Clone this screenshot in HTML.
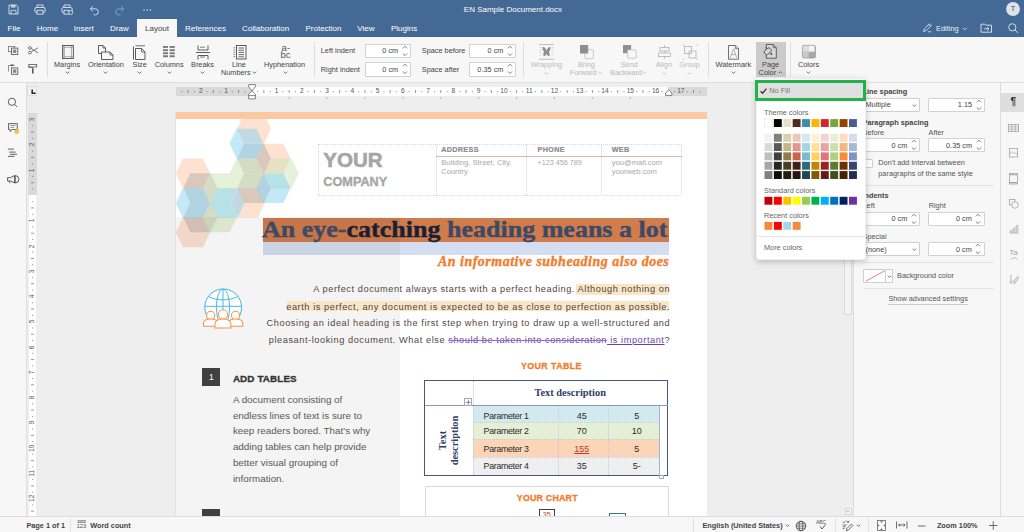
<!DOCTYPE html><html><head><meta charset="utf-8"><style>
*{margin:0;padding:0;box-sizing:border-box}
html,body{width:1024px;height:532px;overflow:hidden;background:#eeeeee;font-family:"Liberation Sans",sans-serif;position:relative}
.a{position:absolute}
.t{position:absolute;white-space:nowrap;line-height:1}
svg{position:absolute;overflow:visible}
</style></head><body>
<div class="a" style="left:0px;top:0px;width:1024px;height:36.5px;background:#446995;"></div>
<svg style="left:7.5px;top:4px" width="11" height="11" viewBox="0 0 11 11"><path d="M1 1h7.3l1.7 1.7v7.3h-9z" fill="none" stroke="#dde5ef" stroke-width="0.9"/><rect x="3" y="1" width="4.5" height="2.6" fill="#dde5ef" opacity="0.8"/><path d="M3 10v-3.6h5v3.6" fill="none" stroke="#dde5ef" stroke-width="0.8"/></svg>
<svg style="left:34px;top:4px" width="12" height="11" viewBox="0 0 12 11"><rect x="0.8" y="3.5" width="10.4" height="5" rx="1.5" fill="none" stroke="#dde5ef" stroke-width="0.9"/><path d="M3 3.5v-2.5h6v2.5" fill="none" stroke="#dde5ef" stroke-width="0.9"/><rect x="3" y="6.3" width="6" height="3.8" fill="#446995" stroke="#dde5ef" stroke-width="0.9"/></svg>
<svg style="left:60.5px;top:4px" width="13" height="11" viewBox="0 0 13 11"><rect x="0.8" y="3.5" width="10.4" height="5" rx="1.5" fill="none" stroke="#dde5ef" stroke-width="0.9"/><path d="M3 3.5v-2.5h6v2.5" fill="none" stroke="#dde5ef" stroke-width="0.9"/><rect x="3" y="6.3" width="5" height="3.8" fill="#446995" stroke="#dde5ef" stroke-width="0.9"/><circle cx="9.8" cy="8.6" r="2" fill="#446995" stroke="#dde5ef" stroke-width="0.8"/></svg>
<svg style="left:88.5px;top:4.5px" width="11" height="11" viewBox="0 0 11 11"><path d="M3.8 1.2L1.2 3.8L3.8 6.4 M1.5 3.8H6.3a3 3 0 0 1 0 6H4.5" fill="none" stroke="#dde5ef" stroke-width="0.9"/></svg>
<svg style="left:114.5px;top:4.5px" width="11" height="11" viewBox="0 0 11 11"><path d="M6.2 1.2L8.8 3.8L6.2 6.4 M8.5 3.8H3.7a3 3 0 0 0 0 6H5.5" fill="none" stroke="#8ea5c3" stroke-width="0.9"/></svg>
<svg style="left:142.8px;top:8.7px" width="9" height="2" viewBox="0 0 9 2"><circle cx="1" cy="1" r="0.7" fill="#e8eef6"/><circle cx="4.2" cy="1" r="0.7" fill="#e8eef6"/><circle cx="7.4" cy="1" r="0.7" fill="#e8eef6"/></svg>
<div class="t" style="left:463.8px;top:5.70px;font-size:8px;color:#ffffff;font-weight:400;font-style:normal;font-family:'Liberation Sans',sans-serif;">EN Sample Document.docx</div>
<svg style="left:1006px;top:2px" width="14" height="14" viewBox="0 0 14 14"><circle cx="7" cy="7" r="6.9" fill="#dfe3ea"/></svg>
<div class="t" style="left:713px;width:600px;text-align:center;top:5.35px;font-size:7.5px;color:#444;font-weight:400;font-style:normal;font-family:'Liberation Sans',sans-serif;">T</div>
<div class="a" style="left:137px;top:19px;width:40px;height:17.5px;background:#f7f7f7;"></div>
<div class="t" style="left:7.5px;top:24.70px;font-size:8px;color:#ffffff;font-weight:400;font-style:normal;font-family:'Liberation Sans',sans-serif;">File</div>
<div class="t" style="left:36.75px;top:24.70px;font-size:8px;color:#ffffff;font-weight:400;font-style:normal;font-family:'Liberation Sans',sans-serif;">Home</div>
<div class="t" style="left:73.75px;top:24.70px;font-size:8px;color:#ffffff;font-weight:400;font-style:normal;font-family:'Liberation Sans',sans-serif;">Insert</div>
<div class="t" style="left:110px;top:24.70px;font-size:8px;color:#ffffff;font-weight:400;font-style:normal;font-family:'Liberation Sans',sans-serif;">Draw</div>
<div class="t" style="left:145px;top:24.70px;font-size:8px;color:#444;font-weight:400;font-style:normal;font-family:'Liberation Sans',sans-serif;">Layout</div>
<div class="t" style="left:185px;top:24.70px;font-size:8px;color:#ffffff;font-weight:400;font-style:normal;font-family:'Liberation Sans',sans-serif;">References</div>
<div class="t" style="left:242px;top:24.70px;font-size:8px;color:#ffffff;font-weight:400;font-style:normal;font-family:'Liberation Sans',sans-serif;">Collaboration</div>
<div class="t" style="left:305.5px;top:24.70px;font-size:8px;color:#ffffff;font-weight:400;font-style:normal;font-family:'Liberation Sans',sans-serif;">Protection</div>
<div class="t" style="left:357.25px;top:24.70px;font-size:8px;color:#ffffff;font-weight:400;font-style:normal;font-family:'Liberation Sans',sans-serif;">View</div>
<div class="t" style="left:391px;top:24.70px;font-size:8px;color:#ffffff;font-weight:400;font-style:normal;font-family:'Liberation Sans',sans-serif;">Plugins</div>
<svg style="left:922px;top:23px" width="11" height="10" viewBox="0 0 11 10"><path d="M1.5 8.5l1-2.8l5-5l1.8 1.8l-5 5z M6.5 1.7l1.8 1.8 M6 8.8h3" fill="none" stroke="#dfe6f0" stroke-width="0.85"/></svg>
<div class="t" style="left:936px;top:24.80px;font-size:7.4px;color:#e8eef6;font-weight:400;font-style:normal;font-family:'Liberation Sans',sans-serif;">Editing</div>
<svg style="left:962px;top:27px" width="6" height="4" viewBox="0 0 6 4"><path d="M0.8 0.8l2 2l2-2" fill="none" stroke="#e8eef6" stroke-width="0.8"/></svg>
<svg style="left:980px;top:23px" width="13" height="10" viewBox="0 0 13 10"><path d="M1 1.2h4l1 1h5.5v7h-10.5z" fill="none" stroke="#dfe6f0" stroke-width="0.9"/><path d="M4 5.8h5 M7.2 4l1.8 1.8l-1.8 1.8" fill="none" stroke="#dfe6f0" stroke-width="0.85"/></svg>
<svg style="left:1008px;top:23px" width="11" height="11" viewBox="0 0 11 11"><circle cx="4.3" cy="4.3" r="3.6" fill="none" stroke="#dfe6f0" stroke-width="0.9"/><path d="M7 7l3 3" stroke="#dfe6f0" stroke-width="0.9"/></svg>
<div class="a" style="left:0px;top:36.5px;width:1024px;height:45.5px;background:#f7f7f7;"></div>
<div class="a" style="left:0px;top:82px;width:1024px;height:1px;background:#dedede;"></div>
<svg style="left:8px;top:46px" width="11" height="9" viewBox="0 0 11 9"><rect x="0.5" y="0.5" width="6.3" height="5.2" fill="none" stroke="#777" stroke-width="0.8"/><rect x="3.4" y="2.1" width="6.4" height="6.4" fill="#f7f7f7" stroke="#555" stroke-width="0.85"/><rect x="4.9" y="3.6" width="3.4" height="3.4" fill="#888"/></svg>
<svg style="left:8px;top:63.5px" width="11" height="11" viewBox="0 0 11 11"><path d="M0.5 7.5v-6h6" fill="none" stroke="#777" stroke-width="0.8"/><rect x="2.6" y="0.5" width="3" height="1.2" fill="#444"/><rect x="3.4" y="3.9" width="6.4" height="6.4" fill="#f7f7f7" stroke="#555" stroke-width="0.85"/><rect x="4.9" y="5.4" width="3.4" height="3.4" fill="#888"/></svg>
<svg style="left:28px;top:46px" width="11" height="9" viewBox="0 0 11 9"><ellipse cx="1.9" cy="1.9" rx="1.5" ry="1.3" fill="none" stroke="#555" stroke-width="0.8"/><ellipse cx="1.9" cy="6.6" rx="1.5" ry="1.3" fill="none" stroke="#555" stroke-width="0.8"/><path d="M3.3 2.6l6.8 4.2 M3.3 5.9l6.8-4.2" stroke="#555" stroke-width="0.8"/></svg>
<svg style="left:28px;top:64px" width="10" height="10" viewBox="0 0 10 10"><rect x="0.9" y="0.4" width="7.8" height="2.6" fill="#f7f7f7" stroke="#555" stroke-width="0.8"/><path d="M0.9 3h0 M0.9 1.7v1.8h3.9v1.5" fill="none" stroke="#555" stroke-width="0.7"/><rect x="4.2" y="4.5" width="1.3" height="5" fill="#333"/></svg>
<div class="a" style="left:46.5px;top:42px;width:1px;height:34.5px;background:#dedede;"></div>
<svg style="left:62px;top:45px" width="12" height="14" viewBox="0 0 12 14"><rect x="0.45" y="0.45" width="10.9" height="13.1" fill="none" stroke="#4a4a4a" stroke-width="0.9"/><path d="M2.4 0.5v13 M9.4 0.5v13 M0.5 2.3h10.8 M0.5 11.7h10.8" stroke="#777" stroke-width="0.6"/><rect x="0.9" y="0.9" width="1.5" height="12.2" fill="#bbb"/></svg>
<div class="t" style="left:54px;top:61.24px;font-size:7.33px;color:#444;font-weight:400;font-style:normal;font-family:'Liberation Sans',sans-serif;">Margins</div>
<svg style="left:64.5px;top:71.0px" width="5" height="3" viewBox="0 0 5 3"><path d="M0.7 0.7l1.8 1.6l1.8-1.6" fill="none" stroke="#4a4a4a" stroke-width="0.75"/></svg>
<svg style="left:98px;top:44.5px" width="16" height="15" viewBox="0 0 16 15"><path d="M0.5 0.5h4.5l2.5 2.5v5.5h-7z" fill="none" stroke="#4a4a4a" stroke-width="0.9"/><path d="M5 0.5v2.5h2.5" fill="none" stroke="#4a4a4a" stroke-width="0.8"/><path d="M3.5 7h8.5l3 3v4.5h-11.5z" fill="#f7f7f7" stroke="#4a4a4a" stroke-width="0.9"/><path d="M12 7v3h3" fill="none" stroke="#4a4a4a" stroke-width="0.8"/></svg>
<div class="t" style="left:88px;top:61.24px;font-size:7.33px;color:#444;font-weight:400;font-style:normal;font-family:'Liberation Sans',sans-serif;">Orientation</div>
<svg style="left:103.0px;top:71.0px" width="5" height="3" viewBox="0 0 5 3"><path d="M0.7 0.7l1.8 1.6l1.8-1.6" fill="none" stroke="#4a4a4a" stroke-width="0.75"/></svg>
<svg style="left:132px;top:44.5px" width="14" height="15" viewBox="0 0 14 15"><path d="M1.5 1.5v13 M3.5 3.5h6l3.5 3.5v7.5h-9.5z" fill="none" stroke="#4a4a4a" stroke-width="0.9"/><path d="M3.5 0.8h9.5 M9.5 3.5v3.5h3.5" fill="none" stroke="#4a4a4a" stroke-width="0.8"/></svg>
<div class="t" style="left:132.5px;top:61.24px;font-size:7.33px;color:#444;font-weight:400;font-style:normal;font-family:'Liberation Sans',sans-serif;">Size</div>
<svg style="left:136.5px;top:71.0px" width="5" height="3" viewBox="0 0 5 3"><path d="M0.7 0.7l1.8 1.6l1.8-1.6" fill="none" stroke="#4a4a4a" stroke-width="0.75"/></svg>
<svg style="left:163.4px;top:46px" width="12" height="12" viewBox="0 0 12 12"><rect x="0" y="0" width="5" height="1.9" fill="#7a7a7a"/><rect x="6.6" y="0" width="5.2" height="1.9" fill="#7a7a7a"/><rect x="0" y="3.2" width="5" height="1.9" fill="#7a7a7a"/><rect x="6.6" y="3.2" width="5.2" height="1.9" fill="#7a7a7a"/><rect x="0" y="6.3" width="5" height="1.9" fill="#7a7a7a"/><rect x="6.6" y="6.3" width="5.2" height="1.9" fill="#7a7a7a"/><rect x="0" y="9.3" width="5" height="1.9" fill="#7a7a7a"/><rect x="6.6" y="9.3" width="5.2" height="1.9" fill="#7a7a7a"/></svg>
<div class="t" style="left:154.7px;top:61.24px;font-size:7.33px;color:#444;font-weight:400;font-style:normal;font-family:'Liberation Sans',sans-serif;">Columns</div>
<svg style="left:167.0px;top:71.0px" width="5" height="3" viewBox="0 0 5 3"><path d="M0.7 0.7l1.8 1.6l1.8-1.6" fill="none" stroke="#4a4a4a" stroke-width="0.75"/></svg>
<svg style="left:196px;top:44.5px" width="14" height="15" viewBox="0 0 14 15"><path d="M2 0.5v4.5h10v-4.5 M2 14.5v-4h10v4 M0 7.5h14" fill="none" stroke="#4a4a4a" stroke-width="0.9"/><path d="M4 2.2h5 M4 12h5" stroke="#4a4a4a" stroke-width="0.7"/></svg>
<div class="t" style="left:191px;top:61.24px;font-size:7.33px;color:#444;font-weight:400;font-style:normal;font-family:'Liberation Sans',sans-serif;">Breaks</div>
<svg style="left:199.5px;top:71.0px" width="5" height="3" viewBox="0 0 5 3"><path d="M0.7 0.7l1.8 1.6l1.8-1.6" fill="none" stroke="#4a4a4a" stroke-width="0.75"/></svg>
<svg style="left:232.6px;top:44.6px" width="14" height="15" viewBox="0 0 14 15"><rect x="3.5" y="0.5" width="9.5" height="13.5" fill="none" stroke="#4a4a4a" stroke-width="0.9"/><path d="M5.5 3.0h5.5" stroke="#4a4a4a" stroke-width="0.8"/><path d="M0.5 2.8h1.6" stroke="#4a4a4a" stroke-width="0.7"/><path d="M5.5 5.2h5.5" stroke="#4a4a4a" stroke-width="0.8"/><path d="M0.5 5.0h1.6" stroke="#4a4a4a" stroke-width="0.7"/><path d="M5.5 7.4h5.5" stroke="#4a4a4a" stroke-width="0.8"/><path d="M0.5 7.2h1.6" stroke="#4a4a4a" stroke-width="0.7"/><path d="M5.5 9.600000000000001h5.5" stroke="#4a4a4a" stroke-width="0.8"/><path d="M0.5 9.4h1.6" stroke="#4a4a4a" stroke-width="0.7"/><path d="M5.5 11.8h5.5" stroke="#4a4a4a" stroke-width="0.8"/><path d="M0.5 11.600000000000001h1.6" stroke="#4a4a4a" stroke-width="0.7"/></svg>
<div class="t" style="left:232px;top:61.24px;font-size:7.33px;color:#444;font-weight:400;font-style:normal;font-family:'Liberation Sans',sans-serif;">Line</div>
<div class="t" style="left:221px;top:68.93px;font-size:7.33px;color:#444;font-weight:400;font-style:normal;font-family:'Liberation Sans',sans-serif;">Numbers</div>
<svg style="left:252.0px;top:70.8px" width="5" height="3" viewBox="0 0 5 3"><path d="M0.7 0.7l1.8 1.6l1.8-1.6" fill="none" stroke="#4a4a4a" stroke-width="0.75"/></svg>
<div class="t" style="left:281.6px;top:43.45px;font-size:9.5px;color:#555;font-weight:400;font-style:normal;font-family:'Liberation Sans',sans-serif;">a-</div>
<div class="t" style="left:280.4px;top:50.10px;font-size:9.6px;color:#555;font-weight:400;font-style:normal;font-family:'Liberation Sans',sans-serif;">bc</div>
<div class="t" style="left:264px;top:61.24px;font-size:7.33px;color:#444;font-weight:400;font-style:normal;font-family:'Liberation Sans',sans-serif;">Hyphenation</div>
<svg style="left:282.5px;top:71.0px" width="5" height="3" viewBox="0 0 5 3"><path d="M0.7 0.7l1.8 1.6l1.8-1.6" fill="none" stroke="#4a4a4a" stroke-width="0.75"/></svg>
<div class="a" style="left:313.5px;top:42px;width:1px;height:34.5px;background:#dedede;"></div>
<div class="t" style="left:320.8px;top:47.04px;font-size:7.33px;color:#444;font-weight:400;font-style:normal;font-family:'Liberation Sans',sans-serif;">Left indent</div>
<div class="a" style="left:364.5px;top:43.6px;width:46.3px;height:14.6px;background:#fff;border:1px solid #d2d2d2;border-radius:1px"></div>
<div class="t" style="left:-201.8px;width:600px;text-align:right;top:47.23px;font-size:7.33px;color:#444;font-weight:400;font-style:normal;font-family:'Liberation Sans',sans-serif;">0 cm</div>
<svg style="left:401.6px;top:44.6px" width="6" height="13" viewBox="0 0 6 13"><path d="M0.9 3.3l2.1-2.1l2.1 2.1 M0.9 8.5l2.1 2.1l2.1-2.1" fill="none" stroke="#555" stroke-width="0.75"/></svg>
<div class="t" style="left:320.8px;top:65.73px;font-size:7.33px;color:#444;font-weight:400;font-style:normal;font-family:'Liberation Sans',sans-serif;">Right indent</div>
<div class="a" style="left:364.5px;top:62.2px;width:46.3px;height:14.6px;background:#fff;border:1px solid #d2d2d2;border-radius:1px"></div>
<div class="t" style="left:-201.8px;width:600px;text-align:right;top:65.83px;font-size:7.33px;color:#444;font-weight:400;font-style:normal;font-family:'Liberation Sans',sans-serif;">0 cm</div>
<svg style="left:401.6px;top:63.2px" width="6" height="13" viewBox="0 0 6 13"><path d="M0.9 3.3l2.1-2.1l2.1 2.1 M0.9 8.5l2.1 2.1l2.1-2.1" fill="none" stroke="#555" stroke-width="0.75"/></svg>
<div class="t" style="left:421.8px;top:47.04px;font-size:7.33px;color:#444;font-weight:400;font-style:normal;font-family:'Liberation Sans',sans-serif;">Space before</div>
<div class="a" style="left:469.3px;top:43.6px;width:46.7px;height:14.6px;background:#fff;border:1px solid #d2d2d2;border-radius:1px"></div>
<div class="t" style="left:-96.60000000000002px;width:600px;text-align:right;top:47.23px;font-size:7.33px;color:#444;font-weight:400;font-style:normal;font-family:'Liberation Sans',sans-serif;">0 cm</div>
<svg style="left:506.8px;top:44.6px" width="6" height="13" viewBox="0 0 6 13"><path d="M0.9 3.3l2.1-2.1l2.1 2.1 M0.9 8.5l2.1 2.1l2.1-2.1" fill="none" stroke="#555" stroke-width="0.75"/></svg>
<div class="t" style="left:421.8px;top:65.73px;font-size:7.33px;color:#444;font-weight:400;font-style:normal;font-family:'Liberation Sans',sans-serif;">Space after</div>
<div class="a" style="left:469.3px;top:62.2px;width:46.7px;height:14.6px;background:#fff;border:1px solid #d2d2d2;border-radius:1px"></div>
<div class="t" style="left:-96.60000000000002px;width:600px;text-align:right;top:65.83px;font-size:7.33px;color:#444;font-weight:400;font-style:normal;font-family:'Liberation Sans',sans-serif;">0.35 cm</div>
<svg style="left:506.8px;top:63.2px" width="6" height="13" viewBox="0 0 6 13"><path d="M0.9 3.3l2.1-2.1l2.1 2.1 M0.9 8.5l2.1 2.1l2.1-2.1" fill="none" stroke="#555" stroke-width="0.75"/></svg>
<div class="a" style="left:523.3px;top:42px;width:1px;height:34.5px;background:#dedede;"></div>
<svg style="left:539px;top:44px" width="16" height="16" viewBox="0 0 16 16"><path d="M0 0.6h15 M0 15.2h15" stroke="#bdbdbd" stroke-width="1"/><path d="M0.5 3.5h2 M0.5 6h2 M0.5 8.5h2 M0.5 11h2 M12.5 3.5h2 M12.5 6h2 M12.5 8.5h2 M12.5 11h2" stroke="#cfcfcf" stroke-width="0.8"/><path d="M3.6 3.2c1.8-0.5 3.2 1.5 3.9 3.5c0.7-2 2.1-4 3.9-3.5c0.3 2-0.4 3.6-1.6 4.6c1 1 1.2 3 0.4 4.5c-1.2 0.2-2.2-1.2-2.7-2.5c-0.5 1.3-1.5 2.7-2.7 2.5c-0.8-1.5-0.6-3.5 0.4-4.5c-1.2-1-1.9-2.6-1.6-4.6z" fill="#8f8f8f"/></svg>
<div class="t" style="left:530.8px;top:61.43px;font-size:7.33px;color:#b9b9b9;font-weight:400;font-style:normal;font-family:'Liberation Sans',sans-serif;">Wrapping</div>
<svg style="left:544.0px;top:71.5px" width="5" height="3" viewBox="0 0 5 3"><path d="M0.7 0.7l1.8 1.6l1.8-1.6" fill="none" stroke="#b9b9b9" stroke-width="0.75"/></svg>
<svg style="left:580px;top:44.9px" width="14" height="14" viewBox="0 0 14 14"><rect x="4.9" y="4.8" width="8.5" height="8.8" rx="1.2" fill="none" stroke="#c4c4c4" stroke-width="0.9"/><rect x="0" y="0" width="8.2" height="8.5" fill="#8f8f8f"/></svg>
<div class="t" style="left:577.7px;top:61.43px;font-size:7.33px;color:#b9b9b9;font-weight:400;font-style:normal;font-family:'Liberation Sans',sans-serif;">Bring</div>
<div class="t" style="left:569.7px;top:68.93px;font-size:7.33px;color:#b9b9b9;font-weight:400;font-style:normal;font-family:'Liberation Sans',sans-serif;">Forward</div>
<svg style="left:597.5px;top:70.8px" width="5" height="3" viewBox="0 0 5 3"><path d="M0.7 0.7l1.8 1.6l1.8-1.6" fill="none" stroke="#b9b9b9" stroke-width="0.75"/></svg>
<svg style="left:622.9px;top:45px" width="14" height="14" viewBox="0 0 14 14"><rect x="0" y="0" width="8.1" height="8.2" fill="#8f8f8f"/><rect x="4.6" y="4.9" width="8.6" height="8.4" rx="1.2" fill="#f7f7f7" stroke="#c4c4c4" stroke-width="0.9"/></svg>
<div class="t" style="left:620.7px;top:61.43px;font-size:7.33px;color:#b9b9b9;font-weight:400;font-style:normal;font-family:'Liberation Sans',sans-serif;">Send</div>
<div class="t" style="left:610px;top:68.93px;font-size:7.33px;color:#b9b9b9;font-weight:400;font-style:normal;font-family:'Liberation Sans',sans-serif;">Backward</div>
<svg style="left:642.0px;top:70.8px" width="5" height="3" viewBox="0 0 5 3"><path d="M0.7 0.7l1.8 1.6l1.8-1.6" fill="none" stroke="#b9b9b9" stroke-width="0.75"/></svg>
<svg style="left:658px;top:45px" width="13" height="14" viewBox="0 0 13 14"><path d="M6.5 0v14" stroke="#b9b9b9" stroke-width="0.9"/><rect x="2" y="2.5" width="9" height="3.5" fill="#f7f7f7" stroke="#b9b9b9" stroke-width="0.9"/><rect x="0.5" y="8" width="12" height="3.5" fill="#f7f7f7" stroke="#b9b9b9" stroke-width="0.9"/></svg>
<div class="t" style="left:655.7px;top:61.43px;font-size:7.33px;color:#b9b9b9;font-weight:400;font-style:normal;font-family:'Liberation Sans',sans-serif;">Align</div>
<svg style="left:661.5px;top:71.5px" width="5" height="3" viewBox="0 0 5 3"><path d="M0.7 0.7l1.8 1.6l1.8-1.6" fill="none" stroke="#b9b9b9" stroke-width="0.75"/></svg>
<svg style="left:683px;top:44.5px" width="15" height="15" viewBox="0 0 15 15"><rect x="1.5" y="1.5" width="7" height="7" fill="none" stroke="#b9b9b9" stroke-width="0.9"/><rect x="6" y="6" width="7" height="7" fill="none" stroke="#b9b9b9" stroke-width="0.9"/><path d="M0 0h1.2 M13.5 0h1.2 M0 14h1.2 M13.5 14h1.2" stroke="#b9b9b9" stroke-width="1"/></svg>
<div class="t" style="left:679.3px;top:61.43px;font-size:7.33px;color:#b9b9b9;font-weight:400;font-style:normal;font-family:'Liberation Sans',sans-serif;">Group</div>
<svg style="left:687.1px;top:71.5px" width="5" height="3" viewBox="0 0 5 3"><path d="M0.7 0.7l1.8 1.6l1.8-1.6" fill="none" stroke="#b9b9b9" stroke-width="0.75"/></svg>
<div class="a" style="left:708px;top:42px;width:1px;height:34.5px;background:#dedede;"></div>
<svg style="left:728.2px;top:44.8px" width="11" height="15" viewBox="0 0 11 15"><path d="M0.5 0.5h6.8l3.2 3.2v10.5h-10z" fill="none" stroke="#5a5a5a" stroke-width="0.85"/><path d="M7.3 0.5v3.2h3.2" fill="none" stroke="#5a5a5a" stroke-width="0.75"/><path d="M2.2 12.8l3.3-9l3.3 9 M3.4 9.6h4.2" fill="none" stroke="#9a9a9a" stroke-width="0.75"/></svg>
<div class="t" style="left:715.6px;top:61.24px;font-size:7.33px;color:#444;font-weight:400;font-style:normal;font-family:'Liberation Sans',sans-serif;">Watermark</div>
<svg style="left:731.0px;top:71.0px" width="5" height="3" viewBox="0 0 5 3"><path d="M0.7 0.7l1.8 1.6l1.8-1.6" fill="none" stroke="#4a4a4a" stroke-width="0.75"/></svg>
<div class="a" style="left:755.5px;top:42px;width:30.5px;height:35px;background:#cbcbcb;"></div>
<svg style="left:764px;top:44.3px" width="13" height="15" viewBox="0 0 13 15"><path d="M2.3 0.5h6.8l3.2 3.2v10.5h-10z" fill="#dadada" stroke="#4a4a4a" stroke-width="0.85"/><path d="M9.1 0.5v3.2h3.2" fill="none" stroke="#4a4a4a" stroke-width="0.75"/><rect x="0.2" y="4.9" width="7.2" height="4.8" rx="1.6" transform="rotate(-40 3.8 7.3)" fill="#d4d4d4" stroke="#4a4a4a" stroke-width="0.85"/><path d="M1.8 3.2l1.2 1.6" stroke="#4a4a4a" stroke-width="0.7"/><circle cx="7.3" cy="10" r="1.1" fill="#4a4a4a"/></svg>
<div class="t" style="left:762px;top:61.24px;font-size:7.33px;color:#444;font-weight:400;font-style:normal;font-family:'Liberation Sans',sans-serif;">Page</div>
<div class="t" style="left:758.6px;top:68.93px;font-size:7.33px;color:#444;font-weight:400;font-style:normal;font-family:'Liberation Sans',sans-serif;">Color</div>
<svg style="left:778.0px;top:70.5px" width="5" height="3" viewBox="0 0 5 3"><path d="M0.7 2.3l1.8-1.6l1.8 1.6" fill="none" stroke="#4a4a4a" stroke-width="0.75"/></svg>
<div class="a" style="left:790.3px;top:42px;width:1px;height:34.5px;background:#dedede;"></div>
<svg style="left:802px;top:45.2px" width="14" height="13.5" viewBox="0 0 14 13.5"><rect x="0.4" y="0.4" width="13" height="12.6" rx="1.2" fill="#a8a8a8" stroke="#9c9c9c" stroke-width="0.8"/><path d="M0.8 0.8h5.9v5.9h-5.9z" fill="#dedede"/><path d="M6.7 0.8h5.9v5.9h-5.9z" fill="#f4f4f4"/><path d="M0.8 6.7h5.9v5.9h-5.9z" fill="#c8c8c8"/></svg>
<div class="t" style="left:798px;top:61.24px;font-size:7.33px;color:#444;font-weight:400;font-style:normal;font-family:'Liberation Sans',sans-serif;">Colors</div>
<svg style="left:806.0px;top:71.0px" width="5" height="3" viewBox="0 0 5 3"><path d="M0.7 0.7l1.8 1.6l1.8-1.6" fill="none" stroke="#4a4a4a" stroke-width="0.75"/></svg>
<div class="a" style="left:175.5px;top:86.8px;width:531.2px;height:8.8px;background:#d9d9d9;"></div>
<div class="a" style="left:251.25px;top:86.8px;width:417.0px;height:8.8px;background:#ffffff;"></div>
<svg style="left:175px;top:86.6px" width="532" height="12" viewBox="0 0 532 12"><path d="M6.76 4v1.2" stroke="#555" stroke-width="0.6"/><path d="M13.07 3v3" stroke="#555" stroke-width="0.6"/><path d="M19.39 4v1.2" stroke="#555" stroke-width="0.6"/><path d="M32.03 4v1.2" stroke="#555" stroke-width="0.6"/><path d="M38.34 3v3" stroke="#555" stroke-width="0.6"/><path d="M44.66 4v1.2" stroke="#555" stroke-width="0.6"/><path d="M57.30 4v1.2" stroke="#555" stroke-width="0.6"/><path d="M63.62 3v3" stroke="#555" stroke-width="0.6"/><path d="M69.93 4v1.2" stroke="#555" stroke-width="0.6"/><path d="M82.57 4v1.2" stroke="#555" stroke-width="0.6"/><path d="M88.88 3v3" stroke="#555" stroke-width="0.6"/><path d="M95.20 4v1.2" stroke="#555" stroke-width="0.6"/><path d="M107.84 4v1.2" stroke="#555" stroke-width="0.6"/><path d="M114.15 3v3" stroke="#555" stroke-width="0.6"/><path d="M120.47 4v1.2" stroke="#555" stroke-width="0.6"/><path d="M133.11 4v1.2" stroke="#555" stroke-width="0.6"/><path d="M139.43 3v3" stroke="#555" stroke-width="0.6"/><path d="M145.74 4v1.2" stroke="#555" stroke-width="0.6"/><path d="M158.38 4v1.2" stroke="#555" stroke-width="0.6"/><path d="M164.69 3v3" stroke="#555" stroke-width="0.6"/><path d="M171.01 4v1.2" stroke="#555" stroke-width="0.6"/><path d="M183.65 4v1.2" stroke="#555" stroke-width="0.6"/><path d="M189.97 3v3" stroke="#555" stroke-width="0.6"/><path d="M196.28 4v1.2" stroke="#555" stroke-width="0.6"/><path d="M208.92 4v1.2" stroke="#555" stroke-width="0.6"/><path d="M215.24 3v3" stroke="#555" stroke-width="0.6"/><path d="M221.55 4v1.2" stroke="#555" stroke-width="0.6"/><path d="M234.19 4v1.2" stroke="#555" stroke-width="0.6"/><path d="M240.50 3v3" stroke="#555" stroke-width="0.6"/><path d="M246.82 4v1.2" stroke="#555" stroke-width="0.6"/><path d="M259.46 4v1.2" stroke="#555" stroke-width="0.6"/><path d="M265.77 3v3" stroke="#555" stroke-width="0.6"/><path d="M272.09 4v1.2" stroke="#555" stroke-width="0.6"/><path d="M284.73 4v1.2" stroke="#555" stroke-width="0.6"/><path d="M291.04 3v3" stroke="#555" stroke-width="0.6"/><path d="M297.36 4v1.2" stroke="#555" stroke-width="0.6"/><path d="M310.00 4v1.2" stroke="#555" stroke-width="0.6"/><path d="M316.31 3v3" stroke="#555" stroke-width="0.6"/><path d="M322.63 4v1.2" stroke="#555" stroke-width="0.6"/><path d="M335.27 4v1.2" stroke="#555" stroke-width="0.6"/><path d="M341.59 3v3" stroke="#555" stroke-width="0.6"/><path d="M347.90 4v1.2" stroke="#555" stroke-width="0.6"/><path d="M360.54 4v1.2" stroke="#555" stroke-width="0.6"/><path d="M366.86 3v3" stroke="#555" stroke-width="0.6"/><path d="M373.17 4v1.2" stroke="#555" stroke-width="0.6"/><path d="M385.81 4v1.2" stroke="#555" stroke-width="0.6"/><path d="M392.12 3v3" stroke="#555" stroke-width="0.6"/><path d="M398.44 4v1.2" stroke="#555" stroke-width="0.6"/><path d="M411.08 4v1.2" stroke="#555" stroke-width="0.6"/><path d="M417.39 3v3" stroke="#555" stroke-width="0.6"/><path d="M423.71 4v1.2" stroke="#555" stroke-width="0.6"/><path d="M436.35 4v1.2" stroke="#555" stroke-width="0.6"/><path d="M442.66 3v3" stroke="#555" stroke-width="0.6"/><path d="M448.98 4v1.2" stroke="#555" stroke-width="0.6"/><path d="M461.62 4v1.2" stroke="#555" stroke-width="0.6"/><path d="M467.93 3v3" stroke="#555" stroke-width="0.6"/><path d="M474.25 4v1.2" stroke="#555" stroke-width="0.6"/><path d="M486.89 4v1.2" stroke="#555" stroke-width="0.6"/><path d="M493.20 3v3" stroke="#555" stroke-width="0.6"/><path d="M499.52 4v1.2" stroke="#555" stroke-width="0.6"/><path d="M512.16 4v1.2" stroke="#555" stroke-width="0.6"/><path d="M518.47 3v3" stroke="#555" stroke-width="0.6"/><path d="M524.79 4v1.2" stroke="#555" stroke-width="0.6"/><path d="M114.15 10.3v1.4" stroke="#666" stroke-width="0.6"/><path d="M152.05 10.3v1.4" stroke="#666" stroke-width="0.6"/><path d="M189.95 10.3v1.4" stroke="#666" stroke-width="0.6"/><path d="M227.85 10.3v1.4" stroke="#666" stroke-width="0.6"/><path d="M265.75 10.3v1.4" stroke="#666" stroke-width="0.6"/><path d="M303.65 10.3v1.4" stroke="#666" stroke-width="0.6"/><path d="M341.55 10.3v1.4" stroke="#666" stroke-width="0.6"/><path d="M379.45 10.3v1.4" stroke="#666" stroke-width="0.6"/><path d="M417.35 10.3v1.4" stroke="#666" stroke-width="0.6"/><path d="M455.25 10.3v1.4" stroke="#666" stroke-width="0.6"/></svg>
<div class="t" style="left:-99.28999999999999px;width:600px;text-align:center;top:87.90px;font-size:6.6px;color:#555;font-weight:400;font-style:normal;font-family:'Liberation Sans',sans-serif;">2</div>
<div class="t" style="left:-74.02000000000001px;width:600px;text-align:center;top:87.90px;font-size:6.6px;color:#555;font-weight:400;font-style:normal;font-family:'Liberation Sans',sans-serif;">1</div>
<div class="t" style="left:-23.480000000000018px;width:600px;text-align:center;top:87.90px;font-size:6.6px;color:#555;font-weight:400;font-style:normal;font-family:'Liberation Sans',sans-serif;">1</div>
<div class="t" style="left:1.7900000000000205px;width:600px;text-align:center;top:87.90px;font-size:6.6px;color:#555;font-weight:400;font-style:normal;font-family:'Liberation Sans',sans-serif;">2</div>
<div class="t" style="left:27.060000000000002px;width:600px;text-align:center;top:87.90px;font-size:6.6px;color:#555;font-weight:400;font-style:normal;font-family:'Liberation Sans',sans-serif;">3</div>
<div class="t" style="left:52.329999999999984px;width:600px;text-align:center;top:87.90px;font-size:6.6px;color:#555;font-weight:400;font-style:normal;font-family:'Liberation Sans',sans-serif;">4</div>
<div class="t" style="left:77.60000000000002px;width:600px;text-align:center;top:87.90px;font-size:6.6px;color:#555;font-weight:400;font-style:normal;font-family:'Liberation Sans',sans-serif;">5</div>
<div class="t" style="left:102.87px;width:600px;text-align:center;top:87.90px;font-size:6.6px;color:#555;font-weight:400;font-style:normal;font-family:'Liberation Sans',sans-serif;">6</div>
<div class="t" style="left:128.14px;width:600px;text-align:center;top:87.90px;font-size:6.6px;color:#555;font-weight:400;font-style:normal;font-family:'Liberation Sans',sans-serif;">7</div>
<div class="t" style="left:153.40999999999997px;width:600px;text-align:center;top:87.90px;font-size:6.6px;color:#555;font-weight:400;font-style:normal;font-family:'Liberation Sans',sans-serif;">8</div>
<div class="t" style="left:178.68px;width:600px;text-align:center;top:87.90px;font-size:6.6px;color:#555;font-weight:400;font-style:normal;font-family:'Liberation Sans',sans-serif;">9</div>
<div class="t" style="left:203.95px;width:600px;text-align:center;top:87.90px;font-size:6.6px;color:#555;font-weight:400;font-style:normal;font-family:'Liberation Sans',sans-serif;">10</div>
<div class="t" style="left:229.22000000000003px;width:600px;text-align:center;top:87.90px;font-size:6.6px;color:#555;font-weight:400;font-style:normal;font-family:'Liberation Sans',sans-serif;">11</div>
<div class="t" style="left:254.49px;width:600px;text-align:center;top:87.90px;font-size:6.6px;color:#555;font-weight:400;font-style:normal;font-family:'Liberation Sans',sans-serif;">12</div>
<div class="t" style="left:279.76px;width:600px;text-align:center;top:87.90px;font-size:6.6px;color:#555;font-weight:400;font-style:normal;font-family:'Liberation Sans',sans-serif;">13</div>
<div class="t" style="left:305.03px;width:600px;text-align:center;top:87.90px;font-size:6.6px;color:#555;font-weight:400;font-style:normal;font-family:'Liberation Sans',sans-serif;">14</div>
<div class="t" style="left:330.29999999999995px;width:600px;text-align:center;top:87.90px;font-size:6.6px;color:#555;font-weight:400;font-style:normal;font-family:'Liberation Sans',sans-serif;">15</div>
<div class="t" style="left:355.56999999999994px;width:600px;text-align:center;top:87.90px;font-size:6.6px;color:#555;font-weight:400;font-style:normal;font-family:'Liberation Sans',sans-serif;">16</div>
<div class="t" style="left:380.8399999999999px;width:600px;text-align:center;top:87.90px;font-size:6.6px;color:#555;font-weight:400;font-style:normal;font-family:'Liberation Sans',sans-serif;">17</div>
<svg style="left:247.5px;top:83.6px" width="8" height="16" viewBox="0 0 8 16"><path d="M0.7 0.6H7.4V2.6L4.05 7L0.7 2.6Z" fill="#fff" stroke="#666" stroke-width="0.8" stroke-linejoin="round"/><path d="M4.05 7L7.4 10.2V14.9H0.7V10.2Z" fill="#fff" stroke="#666" stroke-width="0.8" stroke-linejoin="round"/><path d="M0.7 11.6H7.4" stroke="#666" stroke-width="0.8"/></svg>
<svg style="left:664.8px;top:89px" width="8" height="8" viewBox="0 0 8 8"><path d="M3.5 0.6L6.8 4V6.6H0.6V4Z" fill="#fff" stroke="#666" stroke-width="0.8" stroke-linejoin="round"/></svg>
<div class="a" style="left:27.4px;top:86.3px;width:10px;height:9.4px;background:#f2f2f2;border:1px solid #dcdcdc;border-radius:1px"></div>
<svg style="left:30.5px;top:89.2px" width="6" height="6" viewBox="0 0 6 6"><path d="M1.2 0.4v3.9h3.4" fill="none" stroke="#222" stroke-width="1.5"/></svg>
<div class="a" style="left:28.7px;top:113px;width:7.4px;height:403px;background:#ffffff;"></div>
<div class="a" style="left:28.3px;top:113px;width:8.4px;height:82.30000000000001px;background:#d9d9d9;"></div>
<svg style="left:28px;top:113px" width="9" height="403" viewBox="0 0 9 403"><path d="M4 12.81h1.2" stroke="#555" stroke-width="0.6"/><path d="M3 19.12h3" stroke="#555" stroke-width="0.6"/><path d="M4 25.44h1.2" stroke="#555" stroke-width="0.6"/><path d="M4 38.08h1.2" stroke="#555" stroke-width="0.6"/><path d="M3 44.40h3" stroke="#555" stroke-width="0.6"/><path d="M4 50.71h1.2" stroke="#555" stroke-width="0.6"/><path d="M4 63.35h1.2" stroke="#555" stroke-width="0.6"/><path d="M3 69.67h3" stroke="#555" stroke-width="0.6"/><path d="M4 75.98h1.2" stroke="#555" stroke-width="0.6"/><path d="M4 88.62h1.2" stroke="#555" stroke-width="0.6"/><path d="M3 94.94h3" stroke="#555" stroke-width="0.6"/><path d="M4 101.25h1.2" stroke="#555" stroke-width="0.6"/><path d="M4 113.89h1.2" stroke="#555" stroke-width="0.6"/><path d="M3 120.21h3" stroke="#555" stroke-width="0.6"/><path d="M4 126.52h1.2" stroke="#555" stroke-width="0.6"/><path d="M4 139.16h1.2" stroke="#555" stroke-width="0.6"/><path d="M3 145.48h3" stroke="#555" stroke-width="0.6"/><path d="M4 151.79h1.2" stroke="#555" stroke-width="0.6"/><path d="M4 164.43h1.2" stroke="#555" stroke-width="0.6"/><path d="M3 170.75h3" stroke="#555" stroke-width="0.6"/><path d="M4 177.06h1.2" stroke="#555" stroke-width="0.6"/><path d="M4 189.70h1.2" stroke="#555" stroke-width="0.6"/><path d="M3 196.01h3" stroke="#555" stroke-width="0.6"/><path d="M4 202.33h1.2" stroke="#555" stroke-width="0.6"/><path d="M4 214.97h1.2" stroke="#555" stroke-width="0.6"/><path d="M3 221.28h3" stroke="#555" stroke-width="0.6"/><path d="M4 227.60h1.2" stroke="#555" stroke-width="0.6"/><path d="M4 240.24h1.2" stroke="#555" stroke-width="0.6"/><path d="M3 246.56h3" stroke="#555" stroke-width="0.6"/><path d="M4 252.87h1.2" stroke="#555" stroke-width="0.6"/><path d="M4 265.51h1.2" stroke="#555" stroke-width="0.6"/><path d="M3 271.83h3" stroke="#555" stroke-width="0.6"/><path d="M4 278.14h1.2" stroke="#555" stroke-width="0.6"/><path d="M4 290.78h1.2" stroke="#555" stroke-width="0.6"/><path d="M3 297.10h3" stroke="#555" stroke-width="0.6"/><path d="M4 303.41h1.2" stroke="#555" stroke-width="0.6"/><path d="M4 316.05h1.2" stroke="#555" stroke-width="0.6"/><path d="M3 322.37h3" stroke="#555" stroke-width="0.6"/><path d="M4 328.68h1.2" stroke="#555" stroke-width="0.6"/><path d="M4 341.32h1.2" stroke="#555" stroke-width="0.6"/><path d="M3 347.63h3" stroke="#555" stroke-width="0.6"/><path d="M4 353.95h1.2" stroke="#555" stroke-width="0.6"/><path d="M4 366.59h1.2" stroke="#555" stroke-width="0.6"/><path d="M3 372.91h3" stroke="#555" stroke-width="0.6"/><path d="M4 379.22h1.2" stroke="#555" stroke-width="0.6"/><path d="M4 391.86h1.2" stroke="#555" stroke-width="0.6"/><path d="M3 398.18h3" stroke="#555" stroke-width="0.6"/></svg>
<div class="t" style="left:22.35px;width:20px;text-align:center;top:116.19px;font-size:6.6px;color:#555;transform:rotate(-90deg)">3</div>
<div class="t" style="left:22.35px;width:20px;text-align:center;top:141.46px;font-size:6.6px;color:#555;transform:rotate(-90deg)">2</div>
<div class="t" style="left:22.35px;width:20px;text-align:center;top:166.73px;font-size:6.6px;color:#555;transform:rotate(-90deg)">1</div>
<div class="t" style="left:22.35px;width:20px;text-align:center;top:217.27px;font-size:6.6px;color:#555;transform:rotate(-90deg)">1</div>
<div class="t" style="left:22.35px;width:20px;text-align:center;top:242.54px;font-size:6.6px;color:#555;transform:rotate(-90deg)">2</div>
<div class="t" style="left:22.35px;width:20px;text-align:center;top:267.81px;font-size:6.6px;color:#555;transform:rotate(-90deg)">3</div>
<div class="t" style="left:22.35px;width:20px;text-align:center;top:293.08px;font-size:6.6px;color:#555;transform:rotate(-90deg)">4</div>
<div class="t" style="left:22.35px;width:20px;text-align:center;top:318.35px;font-size:6.6px;color:#555;transform:rotate(-90deg)">5</div>
<div class="t" style="left:22.35px;width:20px;text-align:center;top:343.62px;font-size:6.6px;color:#555;transform:rotate(-90deg)">6</div>
<div class="t" style="left:22.35px;width:20px;text-align:center;top:368.89px;font-size:6.6px;color:#555;transform:rotate(-90deg)">7</div>
<div class="t" style="left:22.35px;width:20px;text-align:center;top:394.16px;font-size:6.6px;color:#555;transform:rotate(-90deg)">8</div>
<div class="t" style="left:22.35px;width:20px;text-align:center;top:419.43px;font-size:6.6px;color:#555;transform:rotate(-90deg)">9</div>
<div class="t" style="left:22.35px;width:20px;text-align:center;top:444.70px;font-size:6.6px;color:#555;transform:rotate(-90deg)">10</div>
<div class="t" style="left:22.35px;width:20px;text-align:center;top:469.97px;font-size:6.6px;color:#555;transform:rotate(-90deg)">11</div>
<div class="t" style="left:22.35px;width:20px;text-align:center;top:495.24px;font-size:6.6px;color:#555;transform:rotate(-90deg)">12</div>
<div class="a" style="left:175px;top:111.8px;width:532.2px;height:410px;background:#e2e2e2;"></div>
<div class="a" style="left:175.5px;top:112.4px;width:531.2px;height:410px;background:#ffffff;"></div>
<div class="a" style="left:175.5px;top:112.4px;width:531.2px;height:6.2px;background:#fbc8a1;"></div>
<div class="a" style="left:843.5px;top:86px;width:8px;height:228.7px;background:#f4f4f4;border:1px solid #d9d9d9;border-radius:1px"></div>
<div class="a" style="left:844.5px;top:507.5px;width:7px;height:7px;background:#f4f4f4;border:1px solid #d9d9d9"></div>
<svg style="left:846px;top:510px" width="4" height="3" viewBox="0 0 4 3"><path d="M0.3 0.5l1.5 1.5l1.5-1.5" fill="none" stroke="#888" stroke-width="0.6"/></svg>
<svg style="left:175px;top:112px" width="140" height="150"><path d="M0.90 61.40 L7.90 46.60 L27.90 46.60 L34.90 61.40 L27.90 76.20 L7.90 76.20z" fill="#fbc3a3" fill-opacity="0.5"/><path d="M0.90 120.40 L7.90 105.60 L27.90 105.60 L34.90 120.40 L27.90 135.20 L7.90 135.20z" fill="#fbc3a3" fill-opacity="0.5"/><path d="M62.00 16.80 L69.00 2.00 L89.00 2.00 L96.00 16.80 L89.00 31.60 L69.00 31.60z" fill="#fbc3a3" fill-opacity="0.5"/><path d="M55.90 90.80 L62.90 76.00 L82.90 76.00 L89.90 90.80 L82.90 105.60 L62.90 105.60z" fill="#fbc3a3" fill-opacity="0.5"/><path d="M81.40 46.50 L88.40 31.70 L108.40 31.70 L115.40 46.50 L108.40 61.30 L88.40 61.30z" fill="#fbc3a3" fill-opacity="0.5"/><path d="M8.40 76.00 L15.40 61.20 L35.40 61.20 L42.40 76.00 L35.40 90.80 L15.40 90.80z" fill="#b9afa8" fill-opacity="0.5"/><path d="M8.40 105.40 L15.40 90.60 L35.40 90.60 L42.40 105.40 L35.40 120.20 L15.40 120.20z" fill="#b9afa8" fill-opacity="0.5"/><path d="M62.00 46.80 L69.00 32.00 L89.00 32.00 L96.00 46.80 L89.00 61.60 L69.00 61.60z" fill="#b9afa8" fill-opacity="0.5"/><path d="M62.00 76.30 L69.00 61.50 L89.00 61.50 L96.00 76.30 L89.00 91.10 L69.00 91.10z" fill="#b9afa8" fill-opacity="0.5"/><path d="M27.80 76.00 L34.80 61.20 L54.80 61.20 L61.80 76.00 L54.80 90.80 L34.80 90.80z" fill="#cbe3b3" fill-opacity="0.5"/><path d="M27.80 105.40 L34.80 90.60 L54.80 90.60 L61.80 105.40 L54.80 120.20 L34.80 120.20z" fill="#cbe3b3" fill-opacity="0.5"/><path d="M54.50 61.50 L61.50 46.70 L81.50 46.70 L88.50 61.50 L81.50 76.30 L61.50 76.30z" fill="#cbe3b3" fill-opacity="0.5"/><path d="M89.60 61.50 L96.60 46.70 L116.60 46.70 L123.60 61.50 L116.60 76.30 L96.60 76.30z" fill="#cbe3b3" fill-opacity="0.5"/><path d="M0.90 91.00 L7.90 76.20 L27.90 76.20 L34.90 91.00 L27.90 105.80 L7.90 105.80z" fill="#87d1f1" fill-opacity="0.5"/><path d="M35.40 91.00 L42.40 76.20 L62.40 76.20 L69.40 91.00 L62.40 105.80 L42.40 105.80z" fill="#87d1f1" fill-opacity="0.5"/><path d="M54.50 31.60 L61.50 16.80 L81.50 16.80 L88.50 31.60 L81.50 46.40 L61.50 46.40z" fill="#87d1f1" fill-opacity="0.5"/><path d="M81.40 76.30 L88.40 61.50 L108.40 61.50 L115.40 76.30 L108.40 91.10 L88.40 91.10z" fill="#87d1f1" fill-opacity="0.5"/></svg>
<div class="a" style="left:175.5px;top:112.4px;width:531.2px;height:6.2px;background:#fbc8a1;"></div>
<div class="a" style="left:317.8px;top:144.2px;width:363.8px;height:52px;border-top:1px dotted #d3d8e6;border-bottom:1px dotted #d3d8e6;border-left:1px dotted #d3d8e6;border-right:1px dotted #d3d8e6"></div>
<div class="a" style="left:436.4px;top:144.7px;width:1px;height:51.5px;border-left:1px dotted #d3d8e6"></div>
<div class="a" style="left:526.4px;top:144.7px;width:1px;height:51.5px;border-left:1px dotted #d3d8e6"></div>
<div class="a" style="left:600.6px;top:144.7px;width:1px;height:51.5px;border-left:1px dotted #d3d8e6"></div>
<div class="a" style="left:436.4px;top:155.6px;width:245.2px;height:1px;background:#d8b9ad;"></div>
<div class="t" style="left:323.3px;top:150.35px;font-size:20.5px;color:#a6a6a6;font-weight:700;font-style:normal;font-family:'Liberation Sans',sans-serif;-webkit-text-stroke:0.6px #a6a6a6">YOUR</div>
<div class="t" style="left:323.3px;top:175.95px;font-size:12.7px;color:#a6a6a6;font-weight:700;font-style:normal;font-family:'Liberation Sans',sans-serif;-webkit-text-stroke:0.35px #a6a6a6">COMPANY</div>
<div class="t" style="left:441.2px;top:145.70px;font-size:7.2px;color:#8a8a8a;font-weight:700;font-style:normal;font-family:'Liberation Sans',sans-serif;letter-spacing:0.35px;-webkit-text-stroke:0.2px #8a8a8a">ADDRESS</div>
<div class="t" style="left:537.5px;top:145.70px;font-size:7.2px;color:#8a8a8a;font-weight:700;font-style:normal;font-family:'Liberation Sans',sans-serif;letter-spacing:0.35px;-webkit-text-stroke:0.2px #8a8a8a">PHONE</div>
<div class="t" style="left:611.7px;top:145.70px;font-size:7.2px;color:#8a8a8a;font-weight:700;font-style:normal;font-family:'Liberation Sans',sans-serif;letter-spacing:0.35px;-webkit-text-stroke:0.2px #8a8a8a">WEB</div>
<div class="t" style="left:441.2px;top:158.50px;font-size:7.6px;color:#a8a8a8;font-weight:400;font-style:normal;font-family:'Liberation Sans',sans-serif;">Building, Street, City,</div>
<div class="t" style="left:441.2px;top:167.90px;font-size:7.6px;color:#a8a8a8;font-weight:400;font-style:normal;font-family:'Liberation Sans',sans-serif;">Country</div>
<div class="t" style="left:537.5px;top:158.70px;font-size:7.2px;color:#a8a8a8;font-weight:400;font-style:normal;font-family:'Liberation Sans',sans-serif;">+123 456 789</div>
<div class="t" style="left:611.7px;top:158.50px;font-size:7.6px;color:#a8a8a8;font-weight:400;font-style:normal;font-family:'Liberation Sans',sans-serif;">you@mail.com</div>
<div class="t" style="left:611.7px;top:167.90px;font-size:7.6px;color:#a8a8a8;font-weight:400;font-style:normal;font-family:'Liberation Sans',sans-serif;">yourweb.com</div>
<div class="a" style="left:262.5px;top:218.3px;width:406.3px;height:23.7px;background:#d07c4d;"></div>
<div class="a" style="left:262.5px;top:242px;width:406.3px;height:12.8px;background:#d4def0;"></div>
<div class="a" style="left:175.5px;top:217.2px;width:224px;height:300px;background:rgba(0,0,0,0.045);"></div>
<div class="t" style="left:262px;top:218.1px;font-size:23px;font-family:'Liberation Serif',serif;font-weight:700;color:#3d4966;-webkit-text-stroke:0.4px #3d4966;transform-origin:0 0;transform:scaleX(1.131)">An eye-<span style="color:#1a1f35;-webkit-text-stroke:0.4px #1a1f35">catching</span> heading means a lot</div>
<div class="t" style="left:69.29999999999995px;width:600px;text-align:right;top:255.30px;font-size:14px;color:#f07d2e;font-weight:700;font-style:italic;font-family:'Liberation Serif',serif;letter-spacing:0.5px;-webkit-text-stroke:0.35px #f07d2e">An informative subheading also does</div>
<svg style="left:198px;top:282px" width="50" height="50" viewBox="0 0 50 50"><g fill="#fff" stroke="#3cb6ea" stroke-width="1"><circle cx="25.2" cy="25.4" r="18.4"/></g><g fill="none" stroke="#3cb6ea" stroke-width="0.95"><ellipse cx="25" cy="25.4" rx="6.6" ry="18.4"/><path d="M25 7v36 M6.8 24.3h36.8 M10.5 14.5c8 4.5 21 4.5 29 0"/></g><g fill="#fff" stroke="#f5924a" stroke-width="1.05"><circle cx="12.7" cy="33.4" r="4.1"/><path d="M5.5 44.2v-2.5c0-3.2 3-4.7 7.2-4.7s7.2 1.5 7.2 4.7v2.5z"/><circle cx="37.6" cy="33.4" r="4.1"/><path d="M30.4 44.2v-2.5c0-3.2 3-4.7 7.2-4.7s7.2 1.5 7.2 4.7v2.5z"/><circle cx="24.9" cy="32.4" r="4.6"/><path d="M16.9 46v-3.5c0-3.8 3.5-5.6 8-5.6s8 1.8 8 5.6v3.5z"/></g></svg>
<div class="a" style="left:576px;top:284.2px;width:92.8px;height:11px;background:#f9e6c6;"></div>
<div class="a" style="left:287.2px;top:300.8px;width:381.6px;height:10.7px;background:#f9e6c6;"></div>
<div class="t" style="left:70.20000000000005px;width:600px;text-align:right;top:285.20px;font-size:9.2px;color:#54443f;font-weight:400;font-style:normal;font-family:'Liberation Sans',sans-serif;letter-spacing:0.57px">A perfect document always starts with a perfect heading. Although nothing on</div>
<div class="t" style="left:70.20000000000005px;width:600px;text-align:right;top:302.80px;font-size:9.2px;color:#54443f;font-weight:400;font-style:normal;font-family:'Liberation Sans',sans-serif;letter-spacing:0.57px">earth is perfect, any document is expected to be as close to perfection as possible.</div>
<div class="t" style="left:70.20000000000005px;width:600px;text-align:right;top:319.40px;font-size:9.2px;color:#54443f;font-weight:400;font-style:normal;font-family:'Liberation Sans',sans-serif;letter-spacing:0.57px">Choosing an ideal heading is the first step when trying to draw up a well-structured and</div>
<div class="t" style="left:70.20000000000005px;width:600px;text-align:right;top:336.00px;font-size:9.2px;color:#54443f;font-weight:400;font-style:normal;font-family:'Liberation Sans',sans-serif;letter-spacing:0.57px">pleasant-looking document. What else <span style="color:#6b3fb3;text-decoration:line-through;text-decoration-thickness:0.7px;text-decoration-color:#8c6cc4">should be taken into consideration</span><span style="color:#6b3fb3;text-decoration:underline;text-decoration-thickness:0.7px"> is important</span>?</div>
<div class="a" style="left:202.3px;top:368px;width:17.9px;height:17.6px;background:#404040;"></div>
<div class="t" style="left:-88.75px;width:600px;text-align:center;top:372.75px;font-size:8.5px;color:#ffffff;font-weight:400;font-style:normal;font-family:'Liberation Sans',sans-serif;">1</div>
<div class="t" style="left:232.9px;top:373.65px;font-size:9.9px;color:#333333;font-weight:700;font-style:normal;font-family:'Liberation Sans',sans-serif;letter-spacing:0.1px;-webkit-text-stroke:0.3px #333">ADD TABLES</div>
<div class="t" style="left:232.9px;top:394.68px;font-size:9.85px;color:#595959;font-weight:400;font-style:normal;font-family:'Liberation Sans',sans-serif;">A document consisting of</div>
<div class="t" style="left:232.9px;top:410.54px;font-size:9.85px;color:#595959;font-weight:400;font-style:normal;font-family:'Liberation Sans',sans-serif;">endless lines of text is sure to</div>
<div class="t" style="left:232.9px;top:426.40px;font-size:9.85px;color:#595959;font-weight:400;font-style:normal;font-family:'Liberation Sans',sans-serif;">keep readers bored. That's why</div>
<div class="t" style="left:232.9px;top:442.25px;font-size:9.85px;color:#595959;font-weight:400;font-style:normal;font-family:'Liberation Sans',sans-serif;">adding tables can help provide</div>
<div class="t" style="left:232.9px;top:458.12px;font-size:9.85px;color:#595959;font-weight:400;font-style:normal;font-family:'Liberation Sans',sans-serif;">better visual grouping of</div>
<div class="t" style="left:232.9px;top:473.98px;font-size:9.85px;color:#595959;font-weight:400;font-style:normal;font-family:'Liberation Sans',sans-serif;">information.</div>
<div class="a" style="left:202.2px;top:509px;width:17.5px;height:8px;background:#404040;"></div>
<div class="t" style="left:251.39999999999998px;width:600px;text-align:center;top:361.55px;font-size:8.9px;color:#f07d2e;font-weight:700;font-style:normal;font-family:'Liberation Sans',sans-serif;letter-spacing:0.4px;-webkit-text-stroke:0.3px #f07d2e">YOUR TABLE</div>
<div class="a" style="left:472.6px;top:405.1px;width:186.7px;height:17.3px;background:#d3e9f0;"></div>
<div class="a" style="left:472.6px;top:422.4px;width:186.7px;height:17px;background:#e5efd6;"></div>
<div class="a" style="left:472.6px;top:439.4px;width:186.7px;height:17.8px;background:#fcd5b9;"></div>
<div class="a" style="left:472.6px;top:457.2px;width:186.7px;height:17.8px;background:#efefef;"></div>
<div class="a" style="left:424.4px;top:379.7px;width:244px;height:96px;border:1.3px solid #4a5580"></div>
<div class="a" style="left:425px;top:404.6px;width:243px;height:1px;background:#8c97b8;"></div>
<div class="a" style="left:472.6px;top:380.5px;width:0;height:94.5px;border-left:1px dotted #c3cbe0"></div>
<div class="a" style="left:557.7px;top:405.5px;width:0;height:69.5px;border-left:1px dotted #c3cbe0"></div>
<div class="a" style="left:608px;top:405.5px;width:0;height:69.5px;border-left:1px dotted #c3cbe0"></div>
<div class="a" style="left:472.6px;top:422.4px;width:186.7px;height:0;border-top:1px dotted #c8cdd8"></div>
<div class="a" style="left:472.6px;top:439.4px;width:186.7px;height:0;border-top:1px dotted #c8cdd8"></div>
<div class="a" style="left:472.6px;top:457.2px;width:186.7px;height:0;border-top:1px dotted #c8cdd8"></div>
<div class="a" style="left:659.3px;top:405.5px;width:0.8px;height:69.5px;background:#9fb7d0;"></div>
<div class="t" style="left:270.20000000000005px;width:600px;text-align:center;top:387.50px;font-size:10.4px;color:#2f3c66;font-weight:700;font-style:normal;font-family:'Liberation Serif',serif;">Text description</div>
<div class="t" style="left:396.3px;top:429px;width:105px;text-align:center;font-size:10.4px;line-height:11.5px;font-family:'Liberation Serif',serif;font-weight:700;color:#2f3c66;transform:rotate(-90deg);white-space:normal">Text<br>description</div>
<div class="t" style="left:483.6px;top:411.60px;font-size:8.8px;color:#2a2a2a;font-weight:400;font-style:normal;font-family:'Liberation Sans',sans-serif;letter-spacing:-0.3px">Parameter 1</div>
<div class="t" style="left:281.79999999999995px;width:600px;text-align:center;top:411.50px;font-size:9px;color:#2a2a2a;font-weight:400;font-style:normal;font-family:'Liberation Sans',sans-serif;">45</div>
<div class="t" style="left:336.70000000000005px;width:600px;text-align:center;top:411.50px;font-size:9px;color:#2a2a2a;font-weight:400;font-style:normal;font-family:'Liberation Sans',sans-serif;">5</div>
<div class="t" style="left:483.6px;top:427.30px;font-size:8.8px;color:#2a2a2a;font-weight:400;font-style:normal;font-family:'Liberation Sans',sans-serif;letter-spacing:-0.3px">Parameter 2</div>
<div class="t" style="left:281.79999999999995px;width:600px;text-align:center;top:427.20px;font-size:9px;color:#2a2a2a;font-weight:400;font-style:normal;font-family:'Liberation Sans',sans-serif;">70</div>
<div class="t" style="left:336.70000000000005px;width:600px;text-align:center;top:427.20px;font-size:9px;color:#2a2a2a;font-weight:400;font-style:normal;font-family:'Liberation Sans',sans-serif;">10</div>
<div class="t" style="left:483.6px;top:444.70px;font-size:8.8px;color:#2a2a2a;font-weight:400;font-style:normal;font-family:'Liberation Sans',sans-serif;letter-spacing:-0.3px">Parameter 3</div>
<div class="t" style="left:281.79999999999995px;width:600px;text-align:center;top:444.60px;font-size:9px;color:#333;font-weight:400;font-style:normal;font-family:'Liberation Sans',sans-serif;"><span style="color:#c0392b;text-decoration:underline">155</span></div>
<div class="t" style="left:336.70000000000005px;width:600px;text-align:center;top:444.60px;font-size:9px;color:#2a2a2a;font-weight:400;font-style:normal;font-family:'Liberation Sans',sans-serif;">5</div>
<div class="t" style="left:483.6px;top:462.40px;font-size:8.8px;color:#2a2a2a;font-weight:400;font-style:normal;font-family:'Liberation Sans',sans-serif;letter-spacing:-0.3px">Parameter 4</div>
<div class="t" style="left:281.79999999999995px;width:600px;text-align:center;top:462.30px;font-size:9px;color:#2a2a2a;font-weight:400;font-style:normal;font-family:'Liberation Sans',sans-serif;">35</div>
<div class="t" style="left:336.70000000000005px;width:600px;text-align:center;top:462.30px;font-size:9px;color:#2a2a2a;font-weight:400;font-style:normal;font-family:'Liberation Sans',sans-serif;">5-</div>
<div class="a" style="left:464.3px;top:398px;width:8px;height:8px;background:#fff;border:0.8px solid #aaa"></div>
<svg style="left:465px;top:398.7px" width="7" height="7" viewBox="0 0 7 7"><path d="M3.3 0.8v5 M0.8 3.3h5" stroke="#444" stroke-width="0.6"/></svg>
<div class="a" style="left:659.3px;top:474.6px;width:4.5px;height:4.5px;background:#fff;border:0.8px solid #aaa"></div>
<div class="a" style="left:424.6px;top:485.9px;width:244.4px;height:40px;border:1px solid #d9d9d9;background:#fff"></div>
<div class="t" style="left:247.29999999999995px;width:600px;text-align:center;top:493.97px;font-size:8.85px;color:#f07d2e;font-weight:700;font-style:normal;font-family:'Liberation Sans',sans-serif;letter-spacing:0.2px;-webkit-text-stroke:0.3px #f07d2e">YOUR CHART</div>
<div class="a" style="left:538.7px;top:508.8px;width:16px;height:10px;border:1px solid #404040;background:#fff"></div>
<div class="t" style="left:246.70000000000005px;width:600px;text-align:center;top:510.50px;font-size:7px;color:#c0392b;font-weight:400;font-style:normal;font-family:'Liberation Sans',sans-serif;">35</div>
<div class="a" style="left:609.3px;top:512.6px;width:16.5px;height:8px;border:1px solid #2e7d8a;background:#fff"></div>
<div class="a" style="left:0px;top:83px;width:26px;height:433.5px;background:#f7f7f7;"></div>
<div class="a" style="left:25.8px;top:83px;width:1px;height:433.5px;background:#dedede;"></div>
<svg style="left:7px;top:96.5px" width="11" height="11" viewBox="0 0 11 11"><circle cx="4.9" cy="4.8" r="3.6" fill="none" stroke="#4a4a4a" stroke-width="0.9"/><path d="M7.5 7.4l2.6 2.6" stroke="#4a4a4a" stroke-width="0.9"/></svg>
<svg style="left:7.5px;top:122.5px" width="12" height="11" viewBox="0 0 12 11"><path d="M0.5 0.6h8.8v5.9h-5l-2 2v-2h-1.8z" fill="none" stroke="#4a4a4a" stroke-width="0.85"/><path d="M2.2 2.5h5.4 M2.2 4.4h4.2" stroke="#777" stroke-width="0.7"/><circle cx="8.7" cy="8.6" r="2.4" fill="#f4c52c"/></svg>
<svg style="left:7px;top:148px" width="11" height="10" viewBox="0 0 11 10"><path d="M0.9 1.1h6.1 M2.2 4.1h6.5 M3 6.3h7 M0.9 8.4h6.5" stroke="#555" stroke-width="0.9"/></svg>
<svg style="left:6.5px;top:174.5px" width="12.5" height="9" viewBox="0 0 12.5 9"><path d="M0.6 2.6h3l4-2v7.4l-4-2h-3z" fill="none" stroke="#4a4a4a" stroke-width="0.9"/><path d="M2.2 5.8l0.8 2.4" stroke="#4a4a4a" stroke-width="0.9"/><path d="M8.2 0.6a3.6 3.6 0 0 1 0 7.4z" fill="none" stroke="#4a4a4a" stroke-width="0.9"/></svg>
<div class="a" style="left:853px;top:83px;width:147px;height:433px;background:#f7f7f7;"></div>
<div class="a" style="left:852.6px;top:83px;width:1px;height:433px;background:#dcdcdc;"></div>
<div class="t" style="left:862.5px;top:88.33px;font-size:7.33px;color:#444;font-weight:700;font-style:normal;font-family:'Liberation Sans',sans-serif;">Line spacing</div>
<div class="a" style="left:862px;top:97.6px;width:58px;height:14.2px;background:#fff;border:1px solid #cfcfcf;border-radius:1px"></div>
<div class="t" style="left:865.5px;top:101.03px;font-size:7.33px;color:#444;font-weight:400;font-style:normal;font-family:'Liberation Sans',sans-serif;">Multiple</div>
<svg style="left:911.5px;top:103.49999999999999px" width="5" height="3" viewBox="0 0 5 3"><path d="M0.7 0.7l1.8 1.6l1.8-1.6" fill="none" stroke="#4a4a4a" stroke-width="0.75"/></svg>
<div class="a" style="left:928px;top:97.6px;width:56.7px;height:14.2px;background:#fff;border:1px solid #d2d2d2;border-radius:1px"></div>
<div class="t" style="left:372.1px;width:600px;text-align:right;top:101.03px;font-size:7.33px;color:#444;font-weight:400;font-style:normal;font-family:'Liberation Sans',sans-serif;">1.15</div>
<svg style="left:975.5px;top:98.6px" width="6" height="13" viewBox="0 0 6 13"><path d="M0.9 3.3l2.1-2.1l2.1 2.1 M0.9 8.5l2.1 2.1l2.1-2.1" fill="none" stroke="#555" stroke-width="0.75"/></svg>
<div class="t" style="left:862.5px;top:118.73px;font-size:7.33px;color:#444;font-weight:700;font-style:normal;font-family:'Liberation Sans',sans-serif;">Paragraph spacing</div>
<div class="t" style="left:862.5px;top:129.14px;font-size:7.33px;color:#555;font-weight:400;font-style:normal;font-family:'Liberation Sans',sans-serif;">Before</div>
<div class="t" style="left:928.5px;top:129.14px;font-size:7.33px;color:#555;font-weight:400;font-style:normal;font-family:'Liberation Sans',sans-serif;">After</div>
<div class="a" style="left:862px;top:138.3px;width:58px;height:14.2px;background:#fff;border:1px solid #d2d2d2;border-radius:1px"></div>
<div class="t" style="left:307.4px;width:600px;text-align:right;top:141.74px;font-size:7.33px;color:#444;font-weight:400;font-style:normal;font-family:'Liberation Sans',sans-serif;">0 cm</div>
<svg style="left:910.8px;top:139.3px" width="6" height="13" viewBox="0 0 6 13"><path d="M0.9 3.3l2.1-2.1l2.1 2.1 M0.9 8.5l2.1 2.1l2.1-2.1" fill="none" stroke="#555" stroke-width="0.75"/></svg>
<div class="a" style="left:928px;top:138.3px;width:56.7px;height:14.2px;background:#fff;border:1px solid #d2d2d2;border-radius:1px"></div>
<div class="t" style="left:372.1px;width:600px;text-align:right;top:141.74px;font-size:7.33px;color:#444;font-weight:400;font-style:normal;font-family:'Liberation Sans',sans-serif;">0.35 cm</div>
<svg style="left:975.5px;top:139.3px" width="6" height="13" viewBox="0 0 6 13"><path d="M0.9 3.3l2.1-2.1l2.1 2.1 M0.9 8.5l2.1 2.1l2.1-2.1" fill="none" stroke="#555" stroke-width="0.75"/></svg>
<div class="a" style="left:863px;top:158.6px;width:9.5px;height:9.5px;background:#fff;border:1px solid #cfcfcf;border-radius:1px"></div>
<div class="t" style="left:878.3px;top:159.34px;font-size:7.33px;color:#555;font-weight:400;font-style:normal;font-family:'Liberation Sans',sans-serif;">Don't add interval between</div>
<div class="t" style="left:878.3px;top:170.34px;font-size:7.33px;color:#555;font-weight:400;font-style:normal;font-family:'Liberation Sans',sans-serif;">paragraphs of the same style</div>
<div class="a" style="left:863.4px;top:185.3px;width:130.3px;height:1px;background:#e3e3e3;"></div>
<div class="t" style="left:862.5px;top:192.24px;font-size:7.33px;color:#444;font-weight:700;font-style:normal;font-family:'Liberation Sans',sans-serif;">Indents</div>
<div class="t" style="left:862.5px;top:202.03px;font-size:7.33px;color:#555;font-weight:400;font-style:normal;font-family:'Liberation Sans',sans-serif;">Left</div>
<div class="t" style="left:928.7px;top:202.03px;font-size:7.33px;color:#555;font-weight:400;font-style:normal;font-family:'Liberation Sans',sans-serif;">Right</div>
<div class="a" style="left:862px;top:211.8px;width:58px;height:14px;background:#fff;border:1px solid #d2d2d2;border-radius:1px"></div>
<div class="t" style="left:307.4px;width:600px;text-align:right;top:215.14px;font-size:7.33px;color:#444;font-weight:400;font-style:normal;font-family:'Liberation Sans',sans-serif;">0 cm</div>
<svg style="left:910.8px;top:212.8px" width="6" height="13" viewBox="0 0 6 13"><path d="M0.9 3.3l2.1-2.1l2.1 2.1 M0.9 8.5l2.1 2.1l2.1-2.1" fill="none" stroke="#555" stroke-width="0.75"/></svg>
<div class="a" style="left:928px;top:211.8px;width:56.5px;height:14px;background:#fff;border:1px solid #d2d2d2;border-radius:1px"></div>
<div class="t" style="left:371.9px;width:600px;text-align:right;top:215.14px;font-size:7.33px;color:#444;font-weight:400;font-style:normal;font-family:'Liberation Sans',sans-serif;">0 cm</div>
<svg style="left:975.3px;top:212.8px" width="6" height="13" viewBox="0 0 6 13"><path d="M0.9 3.3l2.1-2.1l2.1 2.1 M0.9 8.5l2.1 2.1l2.1-2.1" fill="none" stroke="#555" stroke-width="0.75"/></svg>
<div class="t" style="left:862.5px;top:232.53px;font-size:7.33px;color:#555;font-weight:400;font-style:normal;font-family:'Liberation Sans',sans-serif;">Special</div>
<div class="a" style="left:862px;top:242.3px;width:58px;height:14.2px;background:#fff;border:1px solid #cfcfcf;border-radius:1px"></div>
<div class="t" style="left:865.5px;top:245.74px;font-size:7.33px;color:#444;font-weight:400;font-style:normal;font-family:'Liberation Sans',sans-serif;">(none)</div>
<svg style="left:911.5px;top:248.20000000000002px" width="5" height="3" viewBox="0 0 5 3"><path d="M0.7 0.7l1.8 1.6l1.8-1.6" fill="none" stroke="#4a4a4a" stroke-width="0.75"/></svg>
<div class="a" style="left:928px;top:242.3px;width:56.5px;height:14.2px;background:#fff;border:1px solid #d2d2d2;border-radius:1px"></div>
<div class="t" style="left:371.9px;width:600px;text-align:right;top:245.74px;font-size:7.33px;color:#444;font-weight:400;font-style:normal;font-family:'Liberation Sans',sans-serif;">0 cm</div>
<svg style="left:975.3px;top:243.3px" width="6" height="13" viewBox="0 0 6 13"><path d="M0.9 3.3l2.1-2.1l2.1 2.1 M0.9 8.5l2.1 2.1l2.1-2.1" fill="none" stroke="#555" stroke-width="0.75"/></svg>
<div class="a" style="left:863.4px;top:262.4px;width:130.3px;height:1px;background:#e3e3e3;"></div>
<div class="a" style="left:863.4px;top:268.5px;width:30.1px;height:14.1px;background:#fff;border:1px solid #cfcfcf;border-radius:1px"></div>
<div class="a" style="left:885.2px;top:269.5px;width:1px;height:12.1px;background:#cfcfcf;"></div>
<svg style="left:864.5px;top:269.5px" width="21" height="12" viewBox="0 0 21 12"><path d="M0.8 11.2L19.8 0.8" stroke="#f05a5a" stroke-width="0.8"/></svg>
<svg style="left:887.0px;top:274.5px" width="5" height="3" viewBox="0 0 5 3"><path d="M0.7 0.7l1.8 1.6l1.8-1.6" fill="none" stroke="#4a4a4a" stroke-width="0.75"/></svg>
<div class="t" style="left:897px;top:271.63px;font-size:7.33px;color:#555;font-weight:400;font-style:normal;font-family:'Liberation Sans',sans-serif;">Background color</div>
<div class="a" style="left:863.4px;top:288.2px;width:130.3px;height:1px;background:#e3e3e3;"></div>
<div class="t" style="left:888.4px;top:295.33px;font-size:7.33px;color:#555;font-weight:400;font-style:normal;font-family:'Liberation Sans',sans-serif;">Show advanced settings</div>
<div class="a" style="left:888.4px;top:304px;width:79.6px;height:1px;background:#cdcdcd;"></div>
<div class="a" style="left:1000px;top:83px;width:24px;height:433px;background:#f7f7f7;"></div>
<div class="a" style="left:1000px;top:83px;width:1px;height:433px;background:#dcdcdc;"></div>
<div class="a" style="left:1001px;top:92.5px;width:23px;height:19.5px;background:#dedede;"></div>
<div class="t" style="left:713.2px;width:600px;text-align:center;top:97.30px;font-size:10px;color:#333;font-weight:700;font-style:normal;font-family:'Liberation Sans',sans-serif;">¶</div>
<svg style="left:1008.2px;top:124.2px" width="11" height="8" viewBox="0 0 11 8"><rect x="0.4" y="0.4" width="10.2" height="7.2" fill="none" stroke="#a3a3a3" stroke-width="0.8"/><path d="M0.4 2.8h10.2 M0.4 5.2h10.2 M3.8 0.4v7.2 M7.2 0.4v7.2" stroke="#a3a3a3" stroke-width="0.7"/></svg>
<svg style="left:1009.2px;top:148.2px" width="9" height="9.5" viewBox="0 0 9 9.5"><rect x="0.4" y="0.4" width="8" height="8.6" fill="none" stroke="#a3a3a3" stroke-width="0.8"/><path d="M0.6 6.5l2.5-2.8l2 2l1.3-1.2l2 2" fill="none" stroke="#a3a3a3" stroke-width="0.7"/></svg>
<svg style="left:1009.2px;top:172.9px" width="9" height="11.5" viewBox="0 0 9 11.5"><rect x="0.4" y="0.4" width="8" height="10.6" fill="none" stroke="#a3a3a3" stroke-width="0.8"/><path d="M0.4 1.8h8 M0.4 9.6h8" stroke="#a3a3a3" stroke-width="1.1"/></svg>
<svg style="left:1009px;top:199.4px" width="10" height="10" viewBox="0 0 10 10"><rect x="0.4" y="0.4" width="5.6" height="5.6" fill="none" stroke="#a3a3a3" stroke-width="0.8"/><circle cx="6" cy="6" r="3.3" fill="#f7f7f7" stroke="#a3a3a3" stroke-width="0.8"/></svg>
<svg style="left:1009px;top:224px" width="10" height="10" viewBox="0 0 10 10"><path d="M0.5 9h9 M1.2 8.8v-2.3h1.6v2.3 M4.2 8.8v-4.6h1.6v4.6 M7.2 8.8v-7.2h1.6v7.2" fill="none" stroke="#a3a3a3" stroke-width="0.75"/></svg>
<div class="t" style="left:713.5px;width:600px;text-align:center;top:248.80px;font-size:8px;color:#a3a3a3;font-weight:400;font-style:normal;font-family:'Liberation Sans',sans-serif;">Ta</div>
<svg style="left:1009.5px;top:256.5px" width="8" height="3" viewBox="0 0 8 3"><path d="M0.5 2.5c2-2.2 5-2.2 7 0" fill="none" stroke="#a3a3a3" stroke-width="0.7"/></svg>
<svg style="left:1009px;top:274.4px" width="10" height="10.5" viewBox="0 0 10 10.5"><path d="M2 0.5v9.5 M0.5 7.5c1.5 2 3.5 0 5-2 M4.5 9l4-6.5l1.2 0.8l-4 6.5z" fill="none" stroke="#a3a3a3" stroke-width="0.75"/></svg>
<div class="a" style="left:0px;top:516px;width:1024px;height:16px;background:#f7f7f7;"></div>
<div class="a" style="left:0px;top:516px;width:1024px;height:1px;background:#dcdcdc;"></div>
<div class="t" style="left:26.4px;top:521.74px;font-size:7.33px;color:#444;font-weight:700;font-style:normal;font-family:'Liberation Sans',sans-serif;">Page 1 of 1</div>
<div class="a" style="left:70.3px;top:518px;width:1px;height:14px;background:#e2e2e2;"></div>
<svg style="left:76.5px;top:519.5px" width="10" height="10" viewBox="0 0 10 10"><path d="M0.5 0.8h8.5 M0.5 2.3h8.5" stroke="#4a4a4a" stroke-width="0.7"/></svg>
<div class="t" style="left:76.8px;top:524.45px;font-size:5.5px;color:#4a4a4a;font-weight:400;font-style:normal;font-family:'Liberation Sans',sans-serif;"><span style="font-size:5.5px">123</span></div>
<div class="t" style="left:90.2px;top:521.74px;font-size:7.33px;color:#444;font-weight:700;font-style:normal;font-family:'Liberation Sans',sans-serif;">Word count</div>
<div class="a" style="left:693.3px;top:518px;width:1px;height:14px;background:#e2e2e2;"></div>
<div class="t" style="left:702.4px;top:521.74px;font-size:7.33px;color:#444;font-weight:700;font-style:normal;font-family:'Liberation Sans',sans-serif;">English (United States)</div>
<svg style="left:785.3px;top:523.5px" width="5" height="3" viewBox="0 0 5 3"><path d="M0.7 0.7l1.8 1.6l1.8-1.6" fill="none" stroke="#4a4a4a" stroke-width="0.75"/></svg>
<svg style="left:795px;top:519.5px" width="12" height="12" viewBox="0 0 12 12"><circle cx="6" cy="6" r="4.8" fill="none" stroke="#4a4a4a" stroke-width="0.9"/><ellipse cx="6" cy="6" rx="2" ry="4.8" fill="none" stroke="#4a4a4a" stroke-width="0.8"/><path d="M1.2 6h9.6 M1.8 3.8h8.4 M1.8 8.2h8.4" stroke="#4a4a4a" stroke-width="0.7"/></svg>
<div class="t" style="left:816px;top:520.90px;font-size:4.8px;color:#4a4a4a;font-weight:400;font-style:normal;font-family:'Liberation Sans',sans-serif;">ABC</div>
<svg style="left:819px;top:523.5px" width="7" height="6" viewBox="0 0 7 6"><path d="M1 2.5l2 2.5l3.5-4.5" fill="none" stroke="#4a4a4a" stroke-width="0.9"/></svg>
<div class="a" style="left:835.1px;top:518px;width:1px;height:14px;background:#e2e2e2;"></div>
<svg style="left:841.5px;top:519.5px" width="12" height="12" viewBox="0 0 12 12"><path d="M0.6 1.8l1.1 1.1l2-2.2 M5 0.7l2.2 2.2 M7.2 0.7l-2.2 2.2 M0.6 5h4 M0.6 6.8h3 M0.6 8.6h2" fill="none" stroke="#4a4a4a" stroke-width="0.75"/><path d="M4.3 10.6l0.5-2l4.6-4.6l1.5 1.5l-4.6 4.6z" fill="none" stroke="#4a4a4a" stroke-width="0.8"/></svg>
<svg style="left:855.5px;top:523.5px" width="5" height="3" viewBox="0 0 5 3"><path d="M0.7 0.7l1.8 1.6l1.8-1.6" fill="none" stroke="#4a4a4a" stroke-width="0.75"/></svg>
<div class="a" style="left:867.8px;top:518px;width:1px;height:14px;background:#e2e2e2;"></div>
<svg style="left:876.5px;top:519.8px" width="10" height="11" viewBox="0 0 10 11"><rect x="0.5" y="0.5" width="8" height="10" fill="#f7f7f7" stroke="#666" stroke-width="0.8"/><path d="M3 0.5h3l-1.5 2.5z M3 10.5h3l-1.5-2.5z M0.5 3.8v3.4l2-1.7z M8.5 3.8v3.4l-2-1.7z" fill="#777"/></svg>
<svg style="left:895.5px;top:520.5px" width="12" height="8" viewBox="0 0 12 8"><path d="M0.5 0.5v7 M11 0.5v7 M2.5 4h6.5 M4 2.5l-1.5 1.5l1.5 1.5 M7.5 2.5l1.5 1.5l-1.5 1.5" fill="none" stroke="#4a4a4a" stroke-width="0.8"/></svg>
<svg style="left:917.5px;top:524.5px" width="8" height="2" viewBox="0 0 8 2"><path d="M0 1h7.5" stroke="#4a4a4a" stroke-width="0.8"/></svg>
<div class="t" style="left:936.9px;top:521.74px;font-size:7.33px;color:#444;font-weight:700;font-style:normal;font-family:'Liberation Sans',sans-serif;">Zoom 100%</div>
<svg style="left:989px;top:521px" width="9" height="9" viewBox="0 0 9 9"><path d="M0 4.5h8.5 M4.25 0.2v8.5" stroke="#4a4a4a" stroke-width="0.8"/></svg>
<div class="a" style="left:755.7px;top:78.3px;width:110.5px;height:181.3px;background:#fff;border-radius:3px;box-shadow:0 2px 6px rgba(0,0,0,0.22);border:1px solid rgba(0,0,0,0.06)"></div>
<div class="a" style="left:757.5px;top:82.5px;width:106px;height:16.5px;background:#e0e0e0;"></div>
<div class="a" style="left:755px;top:80.2px;width:111px;height:21.2px;border:3px solid #22b14c"></div>
<svg style="left:759.5px;top:87.5px" width="7" height="6" viewBox="0 0 7 6"><path d="M0.6 3.2l2 2l3.8-4.6" fill="none" stroke="#333" stroke-width="1.25"/></svg>
<div class="t" style="left:769.3px;top:87.13px;font-size:7.33px;color:#777;font-weight:400;font-style:normal;font-family:'Liberation Sans',sans-serif;">No Fill</div>
<div class="t" style="left:764px;top:109.33px;font-size:7.33px;color:#666;font-weight:400;font-style:normal;font-family:'Liberation Sans',sans-serif;">Theme colors</div>
<div class="t" style="left:764px;top:186.74px;font-size:7.33px;color:#666;font-weight:400;font-style:normal;font-family:'Liberation Sans',sans-serif;">Standard colors</div>
<div class="t" style="left:764px;top:211.84px;font-size:7.33px;color:#666;font-weight:400;font-style:normal;font-family:'Liberation Sans',sans-serif;">Recent colors</div>
<div class="a" style="left:756.5px;top:236px;width:108.5px;height:1px;background:#e6e6e6;"></div>
<div class="t" style="left:764px;top:243.74px;font-size:7.33px;color:#666;font-weight:400;font-style:normal;font-family:'Liberation Sans',sans-serif;">More colors</div>
<svg style="left:756px;top:78px" width="110" height="182" viewBox="0 0 110 182"><rect x="8.50" y="41.10" width="7.9" height="7.9" fill="#ffffff" stroke="#e3e3e3" stroke-width="0.6"/><rect x="17.89" y="41.10" width="7.9" height="7.9" fill="#000000"/><rect x="27.28" y="41.10" width="7.9" height="7.9" fill="#e8e0cb"/><rect x="36.67" y="41.10" width="7.9" height="7.9" fill="#542a1e"/><rect x="46.06" y="41.10" width="7.9" height="7.9" fill="#3b90a7"/><rect x="55.45" y="41.10" width="7.9" height="7.9" fill="#ffb400"/><rect x="64.84" y="41.10" width="7.9" height="7.9" fill="#d1282e"/><rect x="74.23" y="41.10" width="7.9" height="7.9" fill="#7ba53a"/><rect x="83.62" y="41.10" width="7.9" height="7.9" fill="#954300"/><rect x="93.01" y="41.10" width="7.9" height="7.9" fill="#4a5c95"/><rect x="8.50" y="55.80" width="7.9" height="7.9" fill="#f2f2f2"/><rect x="17.89" y="55.80" width="7.9" height="7.9" fill="#7f7f7f"/><rect x="27.28" y="55.80" width="7.9" height="7.9" fill="#dacfb0"/><rect x="36.67" y="55.80" width="7.9" height="7.9" fill="#eac8bf"/><rect x="46.06" y="55.80" width="7.9" height="7.9" fill="#d2e9f0"/><rect x="55.45" y="55.80" width="7.9" height="7.9" fill="#fff1cd"/><rect x="64.84" y="55.80" width="7.9" height="7.9" fill="#f5d2d3"/><rect x="74.23" y="55.80" width="7.9" height="7.9" fill="#e4eed8"/><rect x="83.62" y="55.80" width="7.9" height="7.9" fill="#fddcc2"/><rect x="93.01" y="55.80" width="7.9" height="7.9" fill="#d6dcec"/><rect x="8.50" y="65.10" width="7.9" height="7.9" fill="#d9d9d9"/><rect x="17.89" y="65.10" width="7.9" height="7.9" fill="#595959"/><rect x="27.28" y="65.10" width="7.9" height="7.9" fill="#c6b584"/><rect x="36.67" y="65.10" width="7.9" height="7.9" fill="#dd9a8b"/><rect x="46.06" y="65.10" width="7.9" height="7.9" fill="#a4d3e1"/><rect x="55.45" y="65.10" width="7.9" height="7.9" fill="#ffe196"/><rect x="64.84" y="65.10" width="7.9" height="7.9" fill="#eba0a4"/><rect x="74.23" y="65.10" width="7.9" height="7.9" fill="#cadfab"/><rect x="83.62" y="65.10" width="7.9" height="7.9" fill="#f9b37c"/><rect x="93.01" y="65.10" width="7.9" height="7.9" fill="#aab6d8"/><rect x="8.50" y="74.40" width="7.9" height="7.9" fill="#bfbfbf"/><rect x="17.89" y="74.40" width="7.9" height="7.9" fill="#404040"/><rect x="27.28" y="74.40" width="7.9" height="7.9" fill="#8f7b46"/><rect x="36.67" y="74.40" width="7.9" height="7.9" fill="#c8634b"/><rect x="46.06" y="74.40" width="7.9" height="7.9" fill="#76bdd3"/><rect x="55.45" y="74.40" width="7.9" height="7.9" fill="#ffd25f"/><rect x="64.84" y="74.40" width="7.9" height="7.9" fill="#e3737a"/><rect x="74.23" y="74.40" width="7.9" height="7.9" fill="#b0cf80"/><rect x="83.62" y="74.40" width="7.9" height="7.9" fill="#f78a33"/><rect x="93.01" y="74.40" width="7.9" height="7.9" fill="#8294c7"/><rect x="8.50" y="83.80" width="7.9" height="7.9" fill="#a6a6a6"/><rect x="17.89" y="83.80" width="7.9" height="7.9" fill="#262626"/><rect x="27.28" y="83.80" width="7.9" height="7.9" fill="#4b3f1f"/><rect x="36.67" y="83.80" width="7.9" height="7.9" fill="#3f1f16"/><rect x="46.06" y="83.80" width="7.9" height="7.9" fill="#2c6b7d"/><rect x="55.45" y="83.80" width="7.9" height="7.9" fill="#c08600"/><rect x="64.84" y="83.80" width="7.9" height="7.9" fill="#9d1f23"/><rect x="74.23" y="83.80" width="7.9" height="7.9" fill="#5c7b2c"/><rect x="83.62" y="83.80" width="7.9" height="7.9" fill="#703100"/><rect x="93.01" y="83.80" width="7.9" height="7.9" fill="#37456f"/><rect x="8.50" y="93.10" width="7.9" height="7.9" fill="#808080"/><rect x="17.89" y="93.10" width="7.9" height="7.9" fill="#0d0d0d"/><rect x="27.28" y="93.10" width="7.9" height="7.9" fill="#211c0e"/><rect x="36.67" y="93.10" width="7.9" height="7.9" fill="#29150f"/><rect x="46.06" y="93.10" width="7.9" height="7.9" fill="#1e4754"/><rect x="55.45" y="93.10" width="7.9" height="7.9" fill="#805900"/><rect x="64.84" y="93.10" width="7.9" height="7.9" fill="#69151a"/><rect x="74.23" y="93.10" width="7.9" height="7.9" fill="#3d511d"/><rect x="83.62" y="93.10" width="7.9" height="7.9" fill="#4a2100"/><rect x="93.01" y="93.10" width="7.9" height="7.9" fill="#252e4a"/><rect x="8.50" y="118.80" width="7.9" height="7.9" fill="#c00000"/><rect x="17.89" y="118.80" width="7.9" height="7.9" fill="#ff0000"/><rect x="27.28" y="118.80" width="7.9" height="7.9" fill="#ffc000"/><rect x="36.67" y="118.80" width="7.9" height="7.9" fill="#ffff00"/><rect x="46.06" y="118.80" width="7.9" height="7.9" fill="#92d050"/><rect x="55.45" y="118.80" width="7.9" height="7.9" fill="#00b050"/><rect x="64.84" y="118.80" width="7.9" height="7.9" fill="#00b0f0"/><rect x="74.23" y="118.80" width="7.9" height="7.9" fill="#0070c0"/><rect x="83.62" y="118.80" width="7.9" height="7.9" fill="#002060"/><rect x="93.01" y="118.80" width="7.9" height="7.9" fill="#7030a0"/><rect x="8.50" y="143.90" width="7.9" height="7.9" fill="#f7883a"/><rect x="17.89" y="143.90" width="7.9" height="7.9" fill="#ff0000"/><rect x="27.28" y="143.90" width="7.9" height="7.9" fill="#a9d6e6"/><rect x="36.67" y="143.90" width="7.9" height="7.9" fill="#f5893f"/></svg>
</body></html>
